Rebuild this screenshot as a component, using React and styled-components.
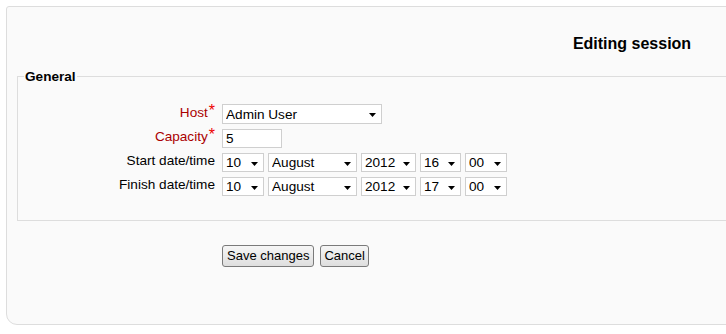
import React from "react";
import styled, { createGlobalStyle } from "styled-components";

const GlobalStyle = createGlobalStyle`
  html, body {
    margin: 0;
    padding: 0;
    background: #ffffff;
    overflow: hidden;
  }
  body {
    font-family: "Liberation Sans", Arial, sans-serif;
    font-size: 13.6px;
    color: #000;
  }
`;

const Page = styled.div`
  padding: 6px 0 0 6px;
  width: 1400px;
`;

const Panel = styled.div`
  width: 1250px;
  height: 317px;
  box-sizing: content-box;
  background: #fafafa;
  border: 1px solid #dddddd;
  border-radius: 3px 0 0 11px;
`;

const Heading = styled.h2`
  margin: 0;
  padding-top: 27px;
  height: 35px;
  text-align: center;
  font-size: 16px;
  font-weight: bold;
  line-height: 19px;
`;

const Fieldset = styled.fieldset`
  margin: 0 10px;
  padding: 20px 0 24px 0;
  border: 1px solid #dddddd;
  border-right: none;
`;

const Legend = styled.legend`
  margin-left: 6px;
  padding: 0 1px;
  font-weight: bold;
  font-size: 13.6px;
  line-height: 15px;
`;

const FormGrid = styled.div`
  display: grid;
  grid-template-columns: 197px auto;
  column-gap: 7px;
  row-gap: 5px;
  align-items: center;
`;

const Label = styled.label`
  text-align: right;
  color: ${({ $required }) => ($required ? "#aa0000" : "#000")};
  line-height: 16px;
  padding-bottom: 3px;
`;

const Star = styled.span`
  color: #ee0000;
  margin-left: 1px;
  font-size: 16px;
  line-height: 0;
  vertical-align: 1px;
`;

const Controls = styled.div`
  display: flex;
  gap: 4px;
  align-items: center;
`;

const SelectWrap = styled.div`
  position: relative;
  width: ${({ $w }) => $w}px;
  height: ${({ $h }) => $h || 19}px;
`;

const Select = styled.select`
  appearance: none;
  -webkit-appearance: none;
  box-sizing: border-box;
  width: 100%;
  height: 100%;
  margin: 0;
  padding: 0 0 0 3px;
  background: #ffffff;
  border: 1px solid #cfcfcf;
  border-radius: 0;
  font-family: "Liberation Sans", Arial, sans-serif;
  font-size: 13.6px;
  color: #000;
  outline: none;
`;

const Arrow = styled.svg`
  position: absolute;
  right: 6px;
  top: 50%;
  margin-top: -1px;
  width: 7px;
  height: 4px;
  pointer-events: none;
`;

const TextInput = styled.input`
  box-sizing: border-box;
  width: 60px;
  height: 19px;
  margin: 0;
  padding: 0 3px;
  background: #ffffff;
  border: 1px solid #cfcfcf;
  font-family: "Liberation Sans", Arial, sans-serif;
  font-size: 13.6px;
  color: #000;
  outline: none;
`;

const Buttons = styled.div`
  display: flex;
  gap: 6px;
  padding: 24px 0 0 215px;
`;

const Button = styled.button`
  height: 22px;
  margin: 0;
  padding: 0 ${({ $pad }) => $pad || 4}px;
  border: 1px solid #7a7a7a;
  border-radius: 3px;
  background: linear-gradient(#f6f6f6, #dedede);
  font-family: "Liberation Sans", Arial, sans-serif;
  font-size: 13px;
  color: #000;
  line-height: 18px;
`;

const Dropdown = ({ w, h, value }) => (
  <SelectWrap $w={w} $h={h}>
    <Select defaultValue={value}>
      <option>{value}</option>
    </Select>
    <Arrow viewBox="0 0 7 4">
      <path d="M0 0H7L3.5 4Z" fill="#000" />
    </Arrow>
  </SelectWrap>
);

const DateTime = ({ hour }) => (
  <Controls>
    <Dropdown w={42} value="10" />
    <Dropdown w={89} value="August" />
    <Dropdown w={55} value="2012" />
    <Dropdown w={41} value={hour} />
    <Dropdown w={42} value="00" />
  </Controls>
);

export default function App() {
  return (
    <>
      <GlobalStyle />
      <Page>
        <Panel>
          <Heading>Editing session</Heading>
          <Fieldset>
            <Legend>General</Legend>
            <FormGrid>
              <Label $required>
                Host<Star>*</Star>
              </Label>
              <Controls>
                <Dropdown w={160} h={20} value="Admin User" />
              </Controls>
              <Label $required>
                Capacity<Star>*</Star>
              </Label>
              <Controls>
                <TextInput defaultValue="5" />
              </Controls>
              <Label>Start date/time</Label>
              <DateTime hour="16" />
              <Label>Finish date/time</Label>
              <DateTime hour="17" />
            </FormGrid>
          </Fieldset>
          <Buttons>
            <Button>Save changes</Button>
            <Button $pad={3}>Cancel</Button>
          </Buttons>
        </Panel>
      </Page>
    </>
  );
}
